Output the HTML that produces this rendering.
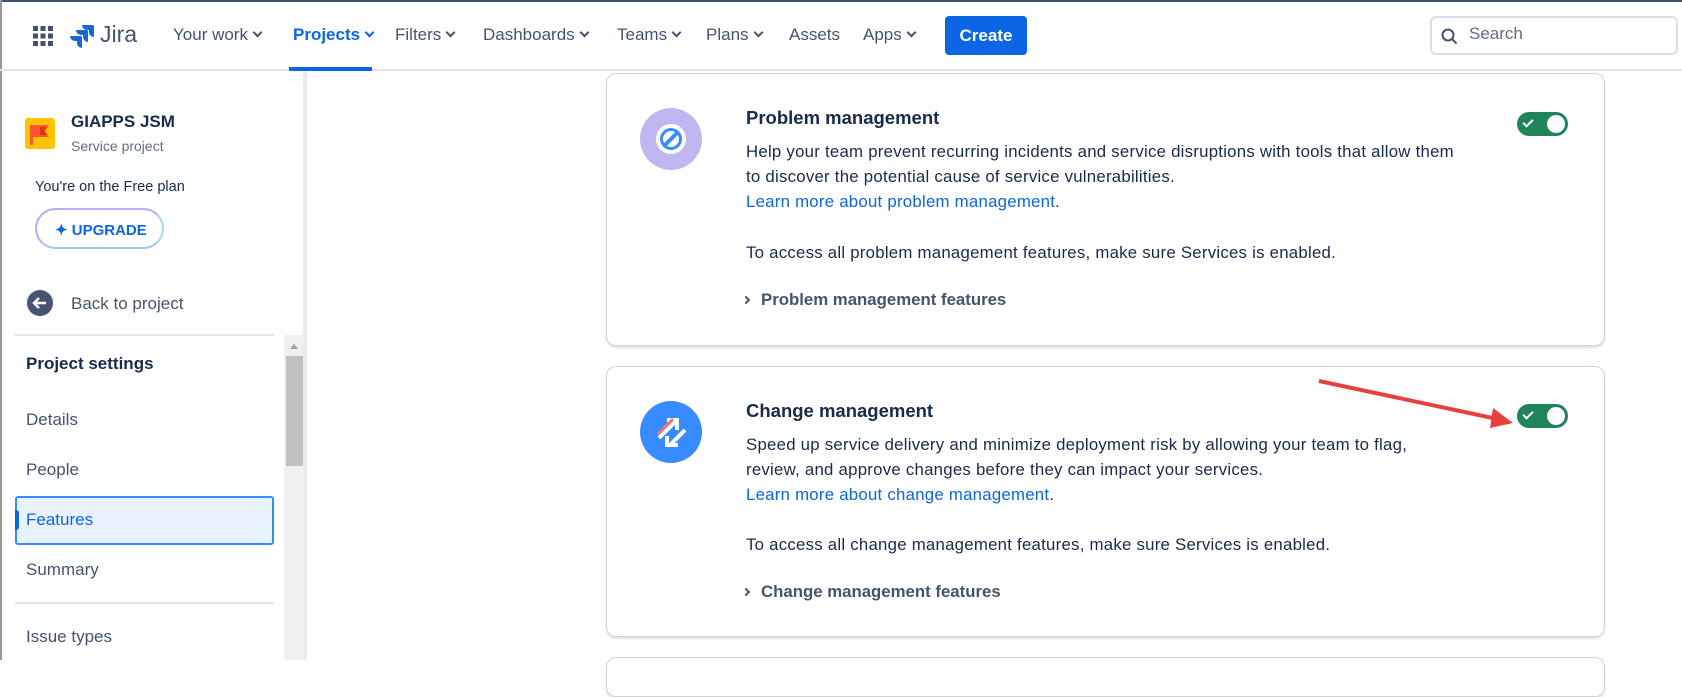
<!DOCTYPE html>
<html><head><meta charset="utf-8"><style>
*{box-sizing:border-box;margin:0;padding:0}
body{width:1682px;height:660px;overflow:hidden;background:#fff;font-family:"Liberation Sans",sans-serif;color:#172b4d;position:relative}
.a{position:absolute;white-space:nowrap}
.nav{font-size:17px;color:#44546f;top:25px}
.chev{display:inline-block;width:7px;height:7px;border-right:2px solid #44546f;border-bottom:2px solid #44546f;transform:rotate(45deg);margin-left:6px;position:relative;top:-4px}
.side{font-size:17px;color:#44546f;left:26px}
.card{position:absolute;left:606px;width:999px;border:1px solid #d0d4da;border-radius:10px;box-shadow:0 2px 2px rgba(0,0,0,.12)}
.t{font-size:16.8px;letter-spacing:0.25px;color:#172b4d;left:746px}
.h{font-size:18.5px;font-weight:bold;left:746px;color:#172b4d}
.lk{color:#0c66e4}
.tog{position:absolute;left:1517px;width:51px;height:24px;border-radius:12px;background:#1f845a}
.tog:after{content:"";position:absolute;right:3px;top:3px;width:18px;height:18px;border-radius:50%;background:#fff}
.tog span{position:absolute;left:8px;top:5px;width:6px;height:10px;border-right:2px solid #fff;border-bottom:2px solid #fff;transform:rotate(45deg)}
.fe{font-size:16.8px;font-weight:bold;color:#44546f;left:746px}
.fe b{display:inline-block;width:6px;height:6px;border-right:2px solid #44546f;border-top:2px solid #44546f;transform:rotate(45deg);margin-right:12px;position:relative;top:-2px}
</style></head><body>
<div class="a" style="left:0;top:0;width:1682px;height:2px;background:#44546f"></div>
<div class="a" style="left:0;top:0;width:2px;height:660px;background:#999"></div>
<div class="a" style="left:0;top:69px;width:1682px;height:2px;background:#e2e4e8"></div>
<svg class="a" style="left:33px;top:26px" width="20" height="20"><g fill="#44546f"><rect x="0" y="0" width="5" height="5"/><rect x="7.5" y="0" width="5" height="5"/><rect x="15" y="0" width="5" height="5"/><rect x="0" y="7.5" width="5" height="5"/><rect x="7.5" y="7.5" width="5" height="5"/><rect x="15" y="7.5" width="5" height="5"/><rect x="0" y="15" width="5" height="5"/><rect x="7.5" y="15" width="5" height="5"/><rect x="15" y="15" width="5" height="5"/></g></svg>
<svg class="a" style="left:70px;top:24px" width="24" height="24"><path d="M23 1H12a5 5 0 0 0 5 5h2v2a5 5 0 0 0 5 5V2z" fill="#1868db"/><path d="M17 6H6a5 5 0 0 0 5 5h2v2a5 5 0 0 0 5 5V7z" fill="#1868db"/><path d="M11 12H0a5 5 0 0 0 5 5h2v2a5 5 0 0 0 5 5V13z" fill="#1868db"/></svg>
<div class="a" style="left:100px;top:21px;font-size:23px;color:#44546f">Jira</div>
<div class="a nav" style="left:173px">Your work<i class="chev"></i></div>
<div class="a nav" style="left:293px;color:#0c66e4;font-weight:bold">Projects<i class="chev" style="border-color:#0c66e4"></i></div>
<div class="a" style="left:289px;top:67px;width:83px;height:4px;background:#0c66e4"></div>
<div class="a nav" style="left:395px">Filters<i class="chev"></i></div>
<div class="a nav" style="left:483px">Dashboards<i class="chev"></i></div>
<div class="a nav" style="left:617px">Teams<i class="chev"></i></div>
<div class="a nav" style="left:706px">Plans<i class="chev"></i></div>
<div class="a nav" style="left:789px">Assets</div>
<div class="a nav" style="left:863px">Apps<i class="chev"></i></div>
<div class="a" style="left:945px;top:16px;width:82px;height:39px;background:#0c66e4;border-radius:4px;color:#fff;font-weight:bold;font-size:17px;text-align:center;line-height:39px">Create</div>
<div class="a" style="left:1430px;top:16px;width:248px;height:39px;border:2px solid #dcdfe4;border-radius:6px"></div>
<svg class="a" style="left:1441px;top:28px" width="17" height="17"><circle cx="7" cy="7" r="5.5" fill="none" stroke="#44546f" stroke-width="2"/><path d="M11 11l4.5 4.5" stroke="#44546f" stroke-width="2"/></svg>
<div class="a" style="left:1469px;top:24px;font-size:17px;color:#626f86">Search</div>
<div class="a" style="left:303px;top:71px;width:4px;height:589px;background:#ebecf0"></div>
<div class="a" style="left:284px;top:335px;width:19px;height:325px;background:#f0f0f0"></div>
<div class="a" style="left:290px;top:344px;width:0;height:0;border:4px solid transparent;border-bottom:5px solid #a0a0a0;border-top:0"></div>
<div class="a" style="left:286px;top:356px;width:17px;height:110px;background:#c1c1c1"></div>
<svg class="a" style="left:25px;top:118px" width="30" height="32"><rect width="30" height="31" rx="3" fill="#ffc400"/><rect x="5" y="7" width="3" height="20" fill="#ff5630"/><path d="M8 7h16l-4 6 4 6H8z" fill="#ff5630"/><path d="M15 9h7l-3 4 3 4h-7z" fill="#de350b"/></svg>
<div class="a" style="left:71px;top:112px;font-size:17px;font-weight:bold;color:#172b4d">GIAPPS JSM</div>
<div class="a" style="left:71px;top:138px;font-size:14px;color:#626f86">Service project</div>
<div class="a" style="left:35px;top:179px;font-size:14.5px;color:#172b4d">You're on the Free plan</div>
<div class="a" style="left:35px;top:208px;width:129px;height:41px;border-radius:21px;border:2px solid #b8acf6;border-right-color:#a6d8f0;border-bottom-color:#9fc8f5"></div>
<div class="a" style="left:55px;top:221px;font-size:15px;color:#0c66e4;font-weight:bold">✦ UPGRADE</div>
<svg class="a" style="left:27px;top:290px" width="26" height="26"><circle cx="13" cy="13" r="13" fill="#44546f"/><path d="M19 13H8M12 8l-5 5 5 5" stroke="#fff" stroke-width="2.5" fill="none"/></svg>
<div class="a side" style="left:71px;top:294px">Back to project</div>
<div class="a" style="left:15px;top:334px;width:259px;height:2px;background:#e2e4e8"></div>
<div class="a" style="left:26px;top:354px;font-size:17px;font-weight:bold;color:#172b4d">Project settings</div>
<div class="a side" style="top:410px">Details</div>
<div class="a side" style="top:460px">People</div>
<div class="a" style="left:15px;top:496px;width:259px;height:49px;background:#e9f2ff;border:2px solid #388bff;border-radius:3px"></div>
<div class="a" style="left:15px;top:510px;width:4px;height:20px;background:#0c66e4;border-radius:0 3px 3px 0"></div>
<div class="a side" style="top:510px;color:#0c66e4">Features</div>
<div class="a side" style="top:560px">Summary</div>
<div class="a" style="left:15px;top:602px;width:259px;height:2px;background:#e2e4e8"></div>
<div class="a side" style="top:627px">Issue types</div>
<div class="card" style="top:73px;height:273px"></div>
<div class="card" style="top:366px;height:271px"></div>
<div class="card" style="top:657px;height:40px"></div>
<svg class="a" style="left:639px;top:107px" width="64" height="64"><circle cx="32" cy="32" r="31" fill="#c0b6f2"/><circle cx="32" cy="32" r="15" fill="#fff"/><circle cx="32" cy="32" r="11" fill="#388bff"/><circle cx="32" cy="32" r="8" fill="#fff"/><path d="M25 39L39 25" stroke="#388bff" stroke-width="4"/></svg>
<div class="a h" style="top:107px">Problem management</div>
<div class="a t" style="top:142px">Help your team prevent recurring incidents and service disruptions with tools that allow them</div>
<div class="a t" style="top:167px">to discover the potential cause of service vulnerabilities.</div>
<div class="a t lk" style="top:192px">Learn more about problem management<span style="color:#172b4d">.</span></div>
<div class="a t" style="top:243px">To access all problem management features, make sure Services is enabled.</div>
<div class="a fe" style="top:290px;left:743px"><b></b>Problem management features</div>
<div class="tog" style="top:112px"><span></span></div>
<svg class="a" style="left:639px;top:400px" width="64" height="64"><circle cx="32" cy="32" r="31" fill="#388bff"/><path d="M20 38L38 20M28 20h10v10" stroke="#fff" stroke-width="4" fill="none"/><path d="M19 34L34 19" stroke="#f87462" stroke-width="3"/><path d="M44 28L30 42M26 34v9h11" stroke="#fff" stroke-width="4" fill="none" transform="translate(2 2)"/></svg>
<div class="a h" style="top:400px">Change management</div>
<div class="a t" style="top:435px">Speed up service delivery and minimize deployment risk by allowing your team to flag,</div>
<div class="a t" style="top:460px">review, and approve changes before they can impact your services.</div>
<div class="a t lk" style="top:485px">Learn more about change management<span style="color:#172b4d">.</span></div>
<div class="a t" style="top:535px">To access all change management features, make sure Services is enabled.</div>
<div class="a fe" style="top:582px;left:743px"><b></b>Change management features</div>
<div class="tog" style="top:404px"><span></span></div>
<svg class="a" style="left:1310px;top:370px" width="220" height="70"><path d="M9 11L192 50" stroke="#e8403c" stroke-width="4"/><path d="M203 53L183 38 180 58z" fill="#e8403c"/></svg>
</body></html>
